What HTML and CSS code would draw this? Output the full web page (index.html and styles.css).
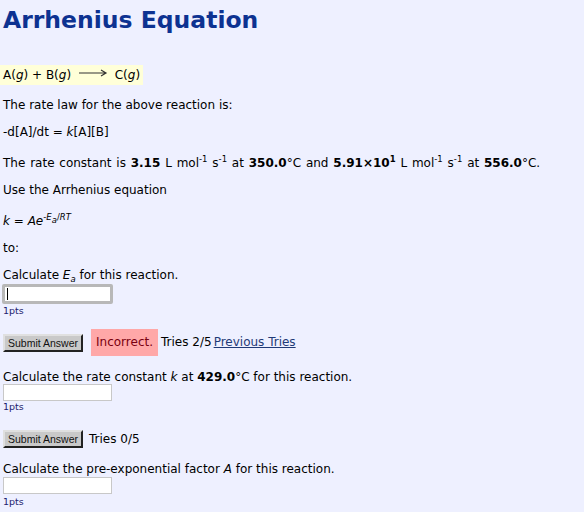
FILE: index.html
```html
<!DOCTYPE html>
<html lang="en">
<head>
  <meta charset="UTF-8" />
  <title>Arrhenius Equation</title>
  <link rel="stylesheet" href="styles.css">
</head>
<body>
  <h1>Arrhenius Equation</h1>

  <p class="equation"><span class="reaction">A(<i>g</i>) + B(<i>g</i>)
    <svg class="arrow" width="30" height="8" viewBox="0 0 30 8"><path d="M1 4H28M23 1L28 4L23 7" fill="none" stroke="#333" stroke-width="1.2"/></svg>
    C(<i>g</i>)</span></p>

  <p>The rate law for the above reaction is:</p>
  <p>-d[A]/dt = <i>k</i>[A][B]</p>
  <p class="raised spaced">The rate constant is <b>3.15</b> L mol<sup>-1</sup> s<sup>-1</sup> at <b>350.0</b>&deg;C and <b>5.91&times;10<sup>1</sup></b> L mol<sup>-1</sup> s<sup>-1</sup> at <b>556.0</b>&deg;C.</p>
  <p>Use the Arrhenius equation</p>
  <p class="raised"><i>k</i> = <i>Ae</i><sup>-<i>E<sub>a</sub></i>/<i>RT</i></sup></p>
  <p>to:</p>

  <div class="question first">
    <div>Calculate <i>E<sub>a</sub></i> for this reaction.</div>
    <span class="field focused"><input type="text"></span>
    <div class="pts">1pts</div>
    <div class="answer-row">
      <button class="submit">Submit Answer</button>
      <span class="incorrect">Incorrect.</span>
      <span>Tries 2/5</span>
      <a href="#">Previous Tries</a>
    </div>
  </div>

  <div class="question">
    <div>Calculate the rate constant <i>k</i> at <b>429.0</b>&deg;C for this reaction.</div>
    <span class="field"><input type="text"></span>
    <div class="pts">1pts</div>
    <div class="answer-row plain">
      <button class="submit">Submit Answer</button>
      <span>Tries 0/5</span>
    </div>
  </div>

  <div class="question last">
    <div>Calculate the pre-exponential factor <i>A</i> for this reaction.</div>
    <span class="field"><input type="text"></span>
    <div class="pts">1pts</div>
  </div>
</body>
</html>
```

FILE: styles.css
```css
body {
  margin: 0;
  padding: 0 3px;
  background: #eef0ff;
  font-family: "DejaVu Sans", Verdana, sans-serif;
  font-size: 12px;
  color: #000;
}
h1 {
  font-size: 23.5px;
  color: #0d3291;
  margin: 5px 0 33px;
  line-height: 30px;
}
p { margin: 12px 0; line-height: 15px; }
p.equation { margin-bottom: 15px; }
p.raised { padding-top: 4px; }
p.spaced { word-spacing: 1px; }
sup { font-size: 8.5px; line-height: 0; vertical-align: 5px; }
sub { font-size: 8.5px; line-height: 0; vertical-align: -3px; }
.reaction {
  background: #ffffd8;
  padding: 3px;
  margin-left: -3px;
}
.arrow { vertical-align: 2px; margin: 0 3px; }
.question { margin-top: 14px; line-height: 15px; }
.question.first { margin-top: 12px; }
.question.first .pts { margin-top: 1px; }
.question.last { margin-top: 14px; }
.question.last .field { margin-top: 0; }
.question.last .pts { margin-top: 2px; }
.field { display: inline-block; position: relative; margin-top: -1px; vertical-align: top; }
.field input {
  width: 109px;
  height: 17px;
  box-sizing: border-box;
  border: 1px solid #c8c8c8;
  background: #fff;
  margin: 0;
  padding: 0;
  display: block;
}
.field.focused { margin-top: 1px; }
.field.focused input {
  border: 3px solid #b8b8b8;
  border-radius: 2px;
  width: 111px;
  height: 20px;
  margin-left: -1px;
}
.field.focused::after {
  content: "";
  position: absolute;
  left: 4px;
  top: 4px;
  width: 1px;
  height: 12px;
  background: #000;
}
.pts {
  font-size: 9.5px;
  color: #22226e;
  line-height: 12px;
}
.answer-row {
  display: flex;
  align-items: center;
  gap: 6px;
  margin-top: 12px;
}
.answer-row.plain { margin-top: 17px; }
.submit {
  font-family: "Liberation Sans", Arial, sans-serif;
  font-size: 10.5px;
  background: #c9c9c9;
  border: 2px outset #e0e0e0;
  border-right-color: #777;
  border-bottom-color: #777;
  border-radius: 0;
  padding: 0 3px;
  height: 18px;
  color: #111;
}
.incorrect {
  background: #ffa8a8;
  color: #7a0010;
  padding: 6px 5px;
  margin-left: 2px;
  margin-right: -3px;
}
.answer-row a { margin-left: -4px; }
a { color: #1f3a77; }
```
